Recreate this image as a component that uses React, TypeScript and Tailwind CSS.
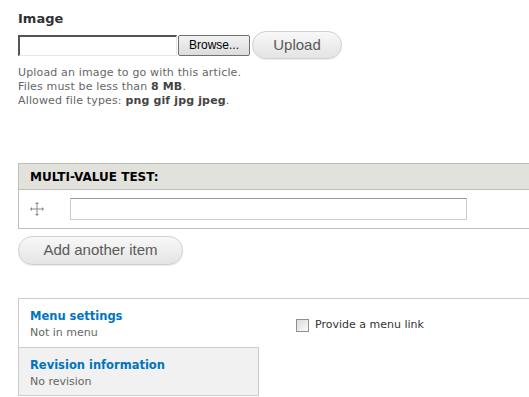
import React from 'react';

const font = { fontFamily: '"DejaVu Sans", Verdana, sans-serif' };

const DragHandle = () => (
  <svg width="14" height="14" viewBox="0 0 14 14" className="text-[#888]">
    <path d="M7 1v12M1 7h12" stroke="currentColor" strokeWidth="1" fill="none" />
    <path d="M7 0l-2 2h4zM7 14l-2-2h4zM0 7l2-2v4zM14 7l-2-2v4z" fill="currentColor" />
  </svg>
);

const PillButton = ({ children, className = '' }: { children: React.ReactNode; className?: string }) => (
  <button
    className={`rounded-[14px] border border-[#d0d0d0] bg-gradient-to-b from-[#f8f8f8] to-[#e4e4e4] text-[#5a5a5a] shadow-[0_1px_1px_rgba(0,0,0,0.08)] ${className}`}
    style={{ fontFamily: '"Liberation Sans", Arial, sans-serif' }}
  >
    {children}
  </button>
);

export default function App() {
  return (
    <div className="w-[529px] h-[397px] overflow-hidden bg-white text-[#333]" style={font}>
      <div className="pl-[18px] pt-[11px]">
        <div className="text-[13px] font-bold text-[#333] leading-[16px]">Image</div>

        <div className="mt-[4px] flex items-center">
          <div className="w-[159px] h-[21px] border border-[#e6e6e6] border-t-[#555] border-l-[#555] border-t-2 border-l-2 bg-white" />
          <button
            className="ml-[1px] h-[21px] w-[72px] rounded-[2px] border border-[#707070] bg-gradient-to-b from-[#f2f2f2] to-[#dcdcdc] text-[12px] text-black leading-none"
            style={{ fontFamily: '"Liberation Sans", Arial, sans-serif' }}
          >
            Browse...
          </button>
          <PillButton className="ml-[2px] h-[28px] w-[90px] text-[15px]">Upload</PillButton>
        </div>

        <div className="mt-[7px] text-[11px] leading-[14px] text-[#666] tracking-[0.15px]">
          <div>Upload an image to go with this article.</div>
          <div>
            Files must be less than <strong className="text-[#444]">8 MB</strong>.
          </div>
          <div>
            Allowed file types: <strong className="text-[#444]">png gif jpg jpeg</strong>.
          </div>
        </div>

        <div className="mt-[55px] border border-r-0 border-[#bebfb9]">
          <div className="h-[26px] flex items-center bg-[#e1e2dc] border-b border-[#bebfb9] pl-[11px] text-[12px] font-bold text-black uppercase">
            Multi-value test:
          </div>
          <div className="h-[38px] flex items-center bg-white pl-[11px]">
            <DragHandle />
            <div className="ml-[26px] w-[397px] h-[22px] border border-[#ccc] border-t-[#999] bg-white" />
          </div>
        </div>

        <PillButton className="mt-[7px] h-[29px] w-[165px] text-[15px]">Add another item</PillButton>

        <div className="mt-[33px] border-t border-[#ccc] flex">
          <div className="w-[241px] border-l border-[#ccc]">
            <div className="h-[48px] bg-white pl-[11px] pt-[9px]">
              <div className="text-[11.5px] font-bold text-[#0074bd] leading-[16px]">Menu settings</div>
              <div className="text-[11px] text-[#666] leading-[14px] mt-[2px]">Not in menu</div>
            </div>
            <div className="h-[49px] bg-[#f1f1f1] border-t border-r border-b border-[#ccc] pl-[11px] pt-[9px]">
              <div className="text-[11.5px] font-bold text-[#0074bd] leading-[16px]">Revision information</div>
              <div className="text-[11px] text-[#666] leading-[14px] mt-[2px]">No revision</div>
            </div>
          </div>
          <div className="flex-1 pl-[37px] pt-[18px]">
            <label className="flex items-center text-[11px] text-[#333]">
              <span className="w-[13px] h-[13px] border border-[#8f8f8f] bg-gradient-to-br from-[#dcdcdc] to-[#fafafa] mr-[6px]" />
              Provide a menu link
            </label>
          </div>
        </div>
      </div>
    </div>
  );
}
